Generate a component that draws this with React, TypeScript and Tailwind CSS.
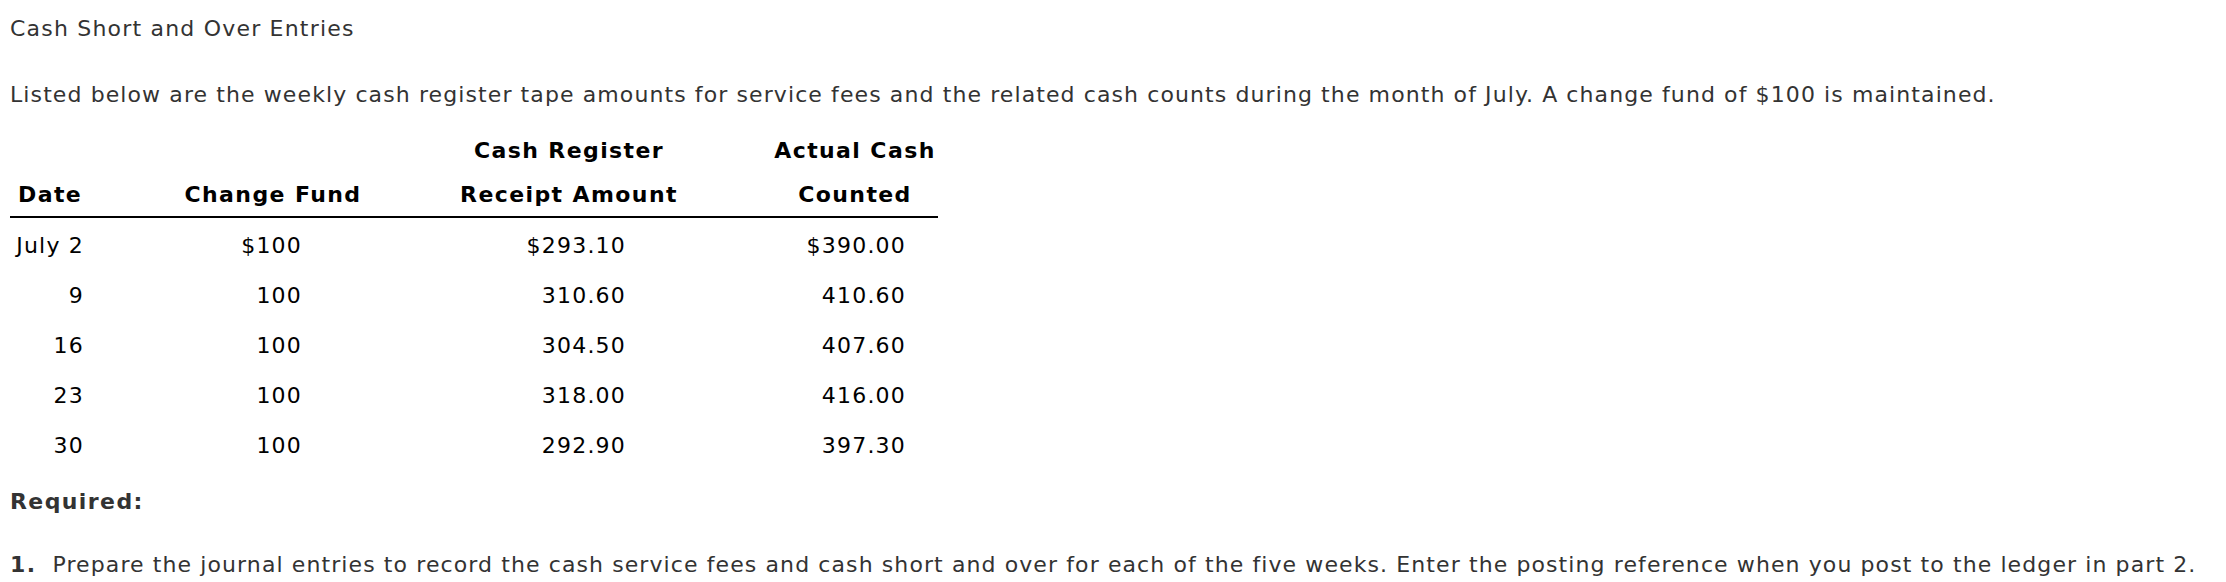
import React from "react";

const rows = [
  ["July 2", "$100", "$293.10", "$390.00"],
  ["9", "100", "310.60", "410.60"],
  ["16", "100", "304.50", "407.60"],
  ["23", "100", "318.00", "416.00"],
  ["30", "100", "292.90", "397.30"],
];

export default function App() {
  return (
    <div
      className="w-[2226px] h-[582px] bg-white pl-[10px] text-[#333333] text-[22px] leading-[33px] tracking-[1.2px] overflow-hidden"
      style={{ fontFamily: '"DejaVu Sans", Verdana, sans-serif' }}
    >
      <div className="pt-[12px]">Cash Short and Over Entries</div>
      <p className="mt-[33px] tracking-[1.1px]">
        Listed below are the weekly cash register tape amounts for service fees and the related cash counts during the month of July. A change fund of $100 is maintained.
      </p>
      <div className="mt-[18px] w-[928px] text-black">
        <div className="grid grid-cols-[150px_226px_366px_186px] font-bold tracking-[1.4px] h-[43px] items-center">
          <div></div>
          <div></div>
          <div className="text-center">Cash Register</div>
          <div className="text-center pl-[20px]">Actual Cash</div>
        </div>
        <div className="grid grid-cols-[150px_226px_366px_186px] font-bold tracking-[1.4px] h-[46px] items-center border-b-2 border-black">
          <div className="pl-[8px]">Date</div>
          <div className="text-center">Change Fund</div>
          <div className="text-center">Receipt Amount</div>
          <div className="text-center pl-[20px]">Counted</div>
        </div>
        <div className="pt-[2px]">
          {rows.map((r, i) => (
            <div key={i} className="grid grid-cols-[150px_226px_366px_186px] h-[50px] items-center">
              <div className="text-right pr-[76px]">{r[0]}</div>
              <div className="text-right pr-[84px]">{r[1]}</div>
              <div className="text-right pr-[126px]">{r[2]}</div>
              <div className="text-right pr-[32px]">{r[3]}</div>
            </div>
          ))}
        </div>
      </div>
      <div className="mt-[15px] font-bold tracking-[1.4px]">Required:</div>
      <p className="mt-[30px] tracking-[1.1px]">
        <span className="font-bold tracking-[1.4px]">1.</span>
        <span className="ml-[16px]">
          Prepare the journal entries to record the cash service fees and cash short and over for each of the five weeks. Enter the posting reference when you post to the ledger in part 2.
        </span>
      </p>
    </div>
  );
}
